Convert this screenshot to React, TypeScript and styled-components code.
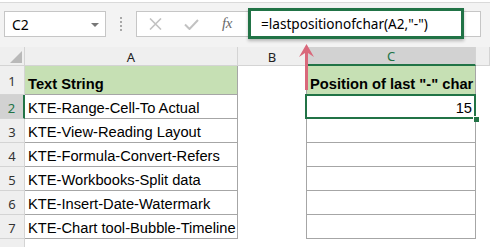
import React from "react";
import styled, { createGlobalStyle, css } from "styled-components";

const GREEN = "#217346";
const GRID = "#a6a6a6";
const HEAD_BG = "#efefef";
const HEAD_LINE = "#d4d4d4";
const UI_FONT = `"Noto Sans", "Open Sans", "DejaVu Sans", sans-serif`;
const CELL_FONT = `"Liberation Sans", Arial, sans-serif`;

const Global = createGlobalStyle`
  html, body { margin: 0; padding: 0; background: #ffffff; }
  body { width: 490px; height: 247px; overflow: hidden; }
`;

const Page = styled.div`
  position: relative;
  width: 490px;
  height: 247px;
  overflow: hidden;
  background: #ffffff;
`;

const TopBand = styled.div`
  margin-top: 2px;
  height: 36px;
  border-top: 1px solid #dadada;
  background: #f3f3f3;
  display: flex;
  align-items: flex-start;
  padding: 8px 9px 0 4px;
`;

const NameBox = styled.div`
  box-sizing: border-box;
  width: 102px;
  height: 26px;
  background: #ffffff;
  border: 1px solid #c6c6c6;
  display: flex;
  align-items: center;
  justify-content: space-between;
  padding: 0 6px 0 7px;
  font-family: ${UI_FONT};
  font-size: 14px;
  color: #000;
`;

const Caret = styled.span`
  width: 0;
  height: 0;
  border-left: 4px solid transparent;
  border-right: 4px solid transparent;
  border-top: 4px solid #777;
  margin-top: 1px;
`;

const Grip = styled.div`
  width: 30px;
  height: 26px;
  display: flex;
  align-items: center;
  justify-content: center;
`;

const FormulaBar = styled.div`
  box-sizing: border-box;
  flex: 1;
  height: 26px;
  background: #ffffff;
  border: 1px solid #c6c6c6;
  display: flex;
  align-items: stretch;
`;

const FormulaButtons = styled.div`
  display: flex;
  width: 111px;
`;

const FormulaButton = styled.div`
  width: 36px;
  display: flex;
  align-items: center;
  justify-content: center;
`;

const Fx = styled.span`
  font-family: "Liberation Serif", "DejaVu Serif", serif;
  font-style: italic;
  font-size: 15px;
  color: #6a6a6a;
  letter-spacing: -0.5px;
  margin-top: -1px;
`;

const FormulaInput = styled.div`
  box-sizing: border-box;
  width: 216px;
  margin: -4px 0 -3px 0;
  border: 3px solid ${GREEN};
  background: #ffffff;
  box-shadow: 0 2px 3px rgba(0, 0, 0, 0.25);
  display: flex;
  align-items: center;
  padding: 0 0 1px 10px;
  font-family: ${UI_FONT};
  font-size: 13.6px;
  color: #000;
  white-space: nowrap;
`;

const Sheet = styled.div`
  display: grid;
  grid-template-columns: 25px 213px 69px 169px 1fr;
  grid-template-rows: 19px 29px repeat(7, 24px);
`;

const HeaderCell = styled.div<{ $selected?: boolean }>`
  box-sizing: border-box;
  background: ${(p) => (p.$selected ? "#d2d2d2" : HEAD_BG)};
  border-right: 1px solid ${HEAD_LINE};
  border-bottom: ${(p) => (p.$selected ? `2px solid ${GREEN}` : `1px solid ${HEAD_LINE}`)};
  display: flex;
  align-items: center;
  justify-content: center;
  font-family: ${UI_FONT};
  font-size: 13px;
  color: ${(p) => (p.$selected ? GREEN : "#222")};
  padding-top: 1px;
`;

const Corner = styled.div`
  box-sizing: border-box;
  background: ${HEAD_BG};
  border-right: 1px solid ${HEAD_LINE};
  border-bottom: 1px solid ${HEAD_LINE};
  display: flex;
  align-items: flex-end;
  justify-content: flex-end;
  padding: 0 2px 2px 0;
`;

const RowHead = styled.div<{ $selected?: boolean }>`
  box-sizing: border-box;
  background: ${(p) => (p.$selected ? "#d2d2d2" : HEAD_BG)};
  border-right: ${(p) => (p.$selected ? `2px solid ${GREEN}` : `1px solid ${HEAD_LINE}`)};
  border-bottom: 1px solid ${HEAD_LINE};
  display: flex;
  align-items: center;
  justify-content: center;
  font-family: ${UI_FONT};
  font-size: 13px;
  color: ${(p) => (p.$selected ? GREEN : "#333")};
  padding-top: 2px;
`;

const Cell = styled.div<{
  $fill?: string;
  $bordered?: boolean;
  $edge?: boolean;
  $bold?: boolean;
  $right?: boolean;
  $active?: boolean;
}>`
  box-sizing: border-box;
  position: relative;
  background: ${(p) => p.$fill || "#ffffff"};
  ${(p) =>
    p.$bordered &&
    css`
      border-right: 1px solid ${GRID};
      border-bottom: 1px solid ${GRID};
    `}
  ${(p) =>
    p.$edge &&
    css`
      border-right: 1px solid ${GRID};
    `}
  display: flex;
  align-items: flex-end;
  justify-content: ${(p) => (p.$right ? "flex-end" : "flex-start")};
  padding: 0 3px 1px 3px;
  font-family: ${CELL_FONT};
  font-size: 14.7px;
  line-height: 17px;
  font-weight: ${(p) => (p.$bold ? 700 : 400)};
  color: #000;
  white-space: nowrap;
  ${(p) =>
    p.$active &&
    css`
      &::after {
        content: "";
        position: absolute;
        left: -2px;
        top: -1px;
        right: -1px;
        bottom: -1px;
        border: 2px solid ${GREEN};
        pointer-events: none;
      }
      &::before {
        content: "";
        position: absolute;
        right: -4px;
        bottom: -4px;
        width: 5px;
        height: 5px;
        background: ${GREEN};
        border-left: 1px solid #fff;
        border-top: 1px solid #fff;
        z-index: 2;
      }
    `}
`;

const Arrow = styled.svg`
  position: absolute;
  left: 296px;
  top: 42px;
  width: 20px;
  height: 52px;
  pointer-events: none;
`;

const rows = [
  "KTE-Range-Cell-To Actual",
  "KTE-View-Reading Layout",
  "KTE-Formula-Convert-Refers",
  "KTE-Workbooks-Split data",
  "KTE-Insert-Date-Watermark",
  "KTE-Chart tool-Bubble-Timeline",
];

const FILL = "#c6e0b4";

export default function App() {
  return (
    <Page>
      <Global />
      <TopBand>
        <NameBox>
          <span>C2</span>
          <Caret />
        </NameBox>
        <Grip>
          <svg width="4" height="14" viewBox="0 0 4 14">
            <rect x="1" y="0" width="2" height="2" fill="#a8a8a8" />
            <rect x="1" y="4" width="2" height="2" fill="#a8a8a8" />
            <rect x="1" y="8" width="2" height="2" fill="#a8a8a8" />
            <rect x="1" y="12" width="2" height="2" fill="#a8a8a8" />
          </svg>
        </Grip>
        <FormulaBar>
          <FormulaButtons>
            <FormulaButton>
              <svg width="13" height="12" viewBox="0 0 13 12">
                <path d="M1 0.5 L12 11.5 M12 0.5 L1 11.5" stroke="#c2c2c2" strokeWidth="1.6" fill="none" />
              </svg>
            </FormulaButton>
            <FormulaButton>
              <svg width="15" height="11" viewBox="0 0 15 11">
                <path d="M1 5.5 L5.5 10 L14 1" stroke="#c2c2c2" strokeWidth="2" fill="none" />
              </svg>
            </FormulaButton>
            <FormulaButton>
              <Fx>fx</Fx>
            </FormulaButton>
          </FormulaButtons>
          <FormulaInput>=lastpositionofchar(A2,"-")</FormulaInput>
        </FormulaBar>
      </TopBand>
      <Sheet>
        <Corner>
          <svg width="12" height="12" viewBox="0 0 12 12">
            <polygon points="12,0 12,12 0,12" fill="#b9b9b9" />
          </svg>
        </Corner>
        <HeaderCell>A</HeaderCell>
        <HeaderCell>B</HeaderCell>
        <HeaderCell $selected>C</HeaderCell>
        <HeaderCell />

        <RowHead>1</RowHead>
        <Cell $fill={FILL} $bordered $bold>
          Text String
        </Cell>
        <Cell $edge />
        <Cell $fill={FILL} $bordered $bold>
          Position of last "-" char
        </Cell>
        <Cell />

        {rows.map((t, i) => (
          <React.Fragment key={t}>
            <RowHead $selected={i === 0}>{i + 2}</RowHead>
            <Cell $bordered>{t}</Cell>
            <Cell $edge />
            <Cell $bordered $right $active={i === 0}>
              {i === 0 ? "15" : ""}
            </Cell>
            <Cell />
          </React.Fragment>
        ))}

        <RowHead>8</RowHead>
        <Cell />
        <Cell />
        <Cell />
        <Cell />
      </Sheet>
      <Arrow viewBox="0 0 20 52">
        <rect x="9" y="8" width="3" height="40" fill="#d9687b" />
        <polygon points="10.5,2 18,15 10.5,10 3,15" fill="#d9687b" />
      </Arrow>
    </Page>
  );
}
